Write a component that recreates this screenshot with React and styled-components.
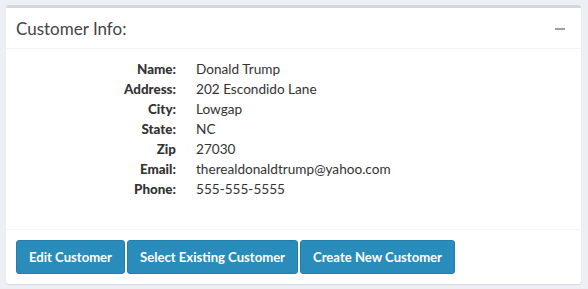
import styled, { createGlobalStyle } from "styled-components";

const GlobalStyle = createGlobalStyle`
  html, body {
    margin: 0;
    padding: 0;
    background: #ecf0f5;
    font-family: Lato, "Liberation Sans", sans-serif;
    color: #333;
  }
  * {
    box-sizing: border-box;
  }
`;

const customer = [
  ["Name:", "Donald Trump"],
  ["Address:", "202 Escondido Lane"],
  ["City:", "Lowgap"],
  ["State:", "NC"],
  ["Zip", "27030"],
  ["Email:", "therealdonaldtrump@yahoo.com"],
  ["Phone:", "555-555-5555"],
];

const App = () => {
  return (
    <Page>
      <GlobalStyle />
      <Box>
        <BoxHeader>
          <BoxTitle>Customer Info:</BoxTitle>
          <CollapseBtn aria-label="collapse" />
        </BoxHeader>
        <BoxBody>
          <InfoList>
            {customer.map(([label, value]) => (
              <InfoRow key={label}>
                <Label>{label}</Label>
                <Value>{value}</Value>
              </InfoRow>
            ))}
          </InfoList>
        </BoxBody>
        <BoxFooter>
          <Button>Edit Customer</Button>
          <Button>Select Existing Customer</Button>
          <Button>Create New Customer</Button>
        </BoxFooter>
      </Box>
    </Page>
  );
};

const Page = styled.div`
  width: 588px;
  height: 289px;
  padding: 5px 7px 0 6px;
`;

const Box = styled.div`
  background: #fff;
  border-top: 3px solid #d2d6de;
  border-radius: 3px;
  box-shadow: 0 1px 1px rgba(0, 0, 0, 0.1);
`;

const BoxHeader = styled.div`
  display: flex;
  align-items: center;
  justify-content: space-between;
  height: 41px;
  padding: 0 10px;
  border-bottom: 1px solid #f4f4f4;
`;

const BoxTitle = styled.h3`
  margin: 0;
  font-size: 17px;
  font-weight: 400;
  line-height: 1;
  color: #444;
`;

const CollapseBtn = styled.span`
  display: block;
  width: 10px;
  height: 2px;
  margin-right: 6px;
  margin-top: 2px;
  background: #97a0b3;
`;

const BoxBody = styled.div`
  padding: 10px 10px 30px;
`;

const InfoList = styled.dl`
  margin: 0;
  display: flex;
  flex-direction: column;
`;

const InfoRow = styled.div`
  display: flex;
  gap: 20px;
  height: 20px;
  align-items: center;
  font-size: 13.6px;
`;

const Label = styled.dt`
  width: 160px;
  text-align: right;
  font-weight: 900;
  font-size: 13.4px;
`;

const Value = styled.dd`
  margin: 0;
`;

const BoxFooter = styled.div`
  display: flex;
  gap: 2px;
  padding: 10px;
  border-top: 1px solid #f4f4f4;
`;

const Button = styled.button`
  height: 34px;
  padding: 0 12px;
  font-family: inherit;
  font-size: 13.1px;
  font-weight: 700;
  color: #fff;
  background: #2a8cbb;
  border: 1px solid #257ea9;
  border-radius: 3px;
  cursor: pointer;
`;

export default App;
